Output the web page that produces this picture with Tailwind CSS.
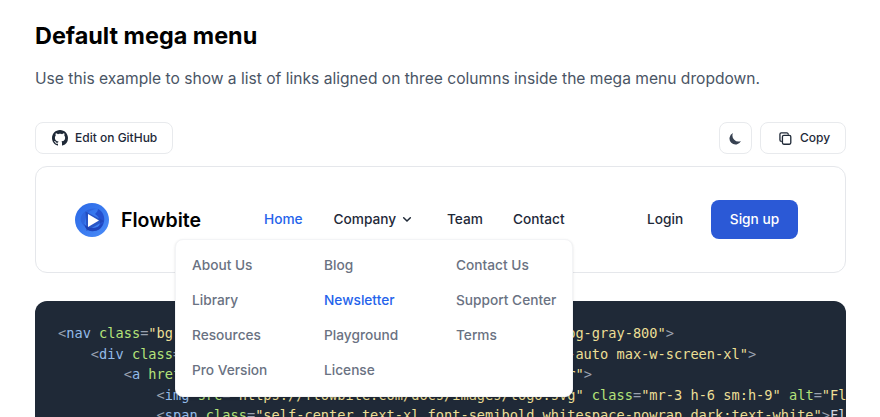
<!DOCTYPE html>
<html lang="en">
<head>
<meta charset="utf-8">
<title>Default mega menu</title>
<script src="https://cdn.jsdelivr.net/npm/@tailwindcss/browser@4"></script>
</head>
<body class="bg-white">
<main class="h-[417px] w-[880px] overflow-hidden pt-[20px] pr-[34px] pl-[35px] font-['Inter',sans-serif] text-gray-900">
  <h2 class="text-[23.4px] leading-8 font-bold text-black">Default mega menu</h2>
  <p class="mt-[15px] text-[15.6px] leading-6 text-gray-600">Use this example to show a list of links aligned on three columns inside the mega menu dropdown.</p>

  <div class="mt-[31px] flex h-[32px] items-stretch gap-[8px]">
    <button class="flex w-[138px] items-center gap-[7px] rounded-lg border border-[#e8eaed] bg-white pl-[16px] text-xs font-medium text-gray-800">
      <svg class="h-[16px] w-[16px]" viewBox="0 0 16 16" fill="#1f2937"><path d="M8 0C3.58 0 0 3.58 0 8c0 3.54 2.29 6.53 5.47 7.59.4.07.55-.17.55-.38 0-.19-.01-.82-.01-1.49-2.01.37-2.53-.49-2.69-.94-.09-.23-.48-.94-.82-1.13-.28-.15-.68-.52-.01-.53.63-.01 1.08.58 1.23.82.72 1.21 1.87.87 2.33.66.07-.52.28-.87.51-1.07-1.78-.2-3.64-.89-3.64-3.95 0-.87.31-1.59.82-2.15-.08-.2-.36-1.02.08-2.12 0 0 .67-.21 2.2.82.64-.18 1.32-.27 2-.27s1.36.09 2 .27c1.53-1.04 2.2-.82 2.2-.82.44 1.1.16 1.92.08 2.12.51.56.82 1.27.82 2.15 0 3.07-1.87 3.75-3.65 3.95.29.25.54.73.54 1.48 0 1.07-.01 1.93-.01 2.2 0 .21.15.46.55.38A8.01 8.01 0 0 0 16 8c0-4.42-3.58-8-8-8z"/></svg>
      Edit on GitHub
    </button>
    <button class="ml-auto flex w-[33px] items-center justify-center rounded-lg border border-[#e8eaed] bg-white" aria-label="Toggle dark mode">
      <svg class="h-[15px] w-[15px]" viewBox="0 0 20 20" fill="#374151"><path d="M17.293 13.293A8 8 0 0 1 6.707 2.707a8.001 8.001 0 1 0 10.586 10.586z"/></svg>
    </button>
    <button class="flex w-[86px] items-center gap-[8px] rounded-lg border border-[#e8eaed] bg-white pl-[18px] text-xs font-medium text-gray-800">
      <svg class="h-[13px] w-[13px]" viewBox="0 0 14 14" fill="none" stroke="#1f2937" stroke-width="1.4"><path d="M10 3V2.500A1.500 1.500 0 0 0 8.500 1h-6A1.500 1.500 0 0 0 1 2.500v6A1.500 1.500 0 0 0 2.500 10H3"/><rect x="3.700" y="3.700" width="9" height="9.500" rx="1.500"/></svg>
      Copy
    </button>
  </div>

  <section class="relative z-10 mt-[12px] h-[107px] rounded-xl border border-gray-200 bg-white">
    <nav class="flex h-full items-center pl-[39px] text-[13.700px] font-medium">
      <a class="flex w-[189px] items-center gap-[12px]">
        <svg class="h-[34px] w-[34px]" viewBox="0 0 34 34">
          <defs><linearGradient id="lg" x1="0" y1="0" x2="1" y2="1"><stop offset="0" stop-color="#2a68e6"/><stop offset="1" stop-color="#4a8cf8"/></linearGradient></defs>
          <circle cx="17" cy="17" r="17" fill="url(#lg)"/>
          <path d="M6 14C8 8 15 4 23 6c-5 0-9 2-11 5l-2 6-1 6c-3-3-4-6-3-9z" fill="#2f66de"/>
          <path d="M23 6c5 2 7 8 6 13-1 5-5 9-11 9 4-2 7-5 7-9 0-3-2-6-5-8 1-1 3-3 3-5z" fill="#2450cf"/>
          <path d="M9 21c1 5 5 8 10 7 4 0 8-3 9-8-3 3-7 5-11 5-3 0-6-2-8-4z" fill="#1f45bd"/>
          <path d="M10.500 8.500L29 18 11.500 28z" fill="#1e40af" opacity=".65"/>
          <path d="M13 11L24 17.500 13 24z" fill="#ffffff"/>
        </svg>
        <span class="text-[19.500px] leading-7 font-semibold text-black">Flowbite</span>
      </a>
      <a class="w-[69.500px] text-[#2563eb]">Home</a>
      <a class="flex w-[113.500px] items-center gap-[6px] text-gray-800">Company
        <svg class="h-[10px] w-[10px]" viewBox="0 0 12 12" fill="none" stroke="#1f2937" stroke-width="1.800" stroke-linecap="round" stroke-linejoin="round"><path d="M2 4.500L6 8.500l4-4"/></svg>
      </a>
      <a class="w-[66px] text-gray-800">Team</a>
      <a class="w-[134px] text-gray-800">Contact</a>
      <a class="w-[64px] text-gray-800">Login</a>
      <a class="flex h-[39px] w-[87px] items-center justify-center rounded-lg bg-[#2b59d6] text-white">Sign up</a>
    </nav>
    <div class="absolute top-[72px] left-[139px] grid h-[158px] w-[398px] grid-cols-[132px_132px_1fr] content-start gap-y-[15px] rounded-lg border border-gray-100 bg-white pt-[15px] pl-[16px] text-[13.700px] leading-5 font-medium text-gray-500 shadow-sm">
      <a>About Us</a><a>Blog</a><a>Contact Us</a>
      <a>Library</a><a class="text-[#2563eb]">Newsletter</a><a>Support Center</a>
      <a>Resources</a><a>Playground</a><a>Terms</a>
      <a>Pro Version</a><a>License</a>
    </div>
  </section>

  <pre class="mt-[28px] h-[200px] overflow-hidden rounded-xl bg-[#1f2937] pt-[22px] pl-[23px] text-gray-300"><code class="block font-['DejaVu_Sans_Mono',monospace] text-[13.650px] leading-[20.500px]"><span class="text-gray-400">&lt;</span><span class="text-[#93bbe8]">nav</span> <span class="text-[#b5e37a]">class</span><span class="text-gray-400">=</span><span class="text-[#ecdf95]">"bg-white border-b border-gray-200 px-4 py-10 dark:bg-gray-800"</span><span class="text-gray-400">&gt;</span>
    <span class="text-gray-400">&lt;</span><span class="text-[#93bbe8]">div</span> <span class="text-[#b5e37a]">class</span><span class="text-gray-400">=</span><span class="text-[#ecdf95]">"flex flex-wrap justify-between items-center mx-auto max-w-screen-xl"</span><span class="text-gray-400">&gt;</span>
        <span class="text-gray-400">&lt;</span><span class="text-[#93bbe8]">a</span> <span class="text-[#b5e37a]">href</span><span class="text-gray-400">=</span><span class="text-[#ecdf95]">"https://flowbite.com"</span> <span class="text-[#b5e37a]">class</span><span class="text-gray-400">=</span><span class="text-[#ecdf95]">"flex items-center"</span><span class="text-gray-400">&gt;</span>
            <span class="text-gray-400">&lt;</span><span class="text-[#93bbe8]">img</span> <span class="text-[#b5e37a]">src</span><span class="text-gray-400">=</span><span class="text-[#ecdf95]">"https://flowbite.com/docs/images/logo.svg"</span> <span class="text-[#b5e37a]">class</span><span class="text-gray-400">=</span><span class="text-[#ecdf95]">"mr-3 h-6 sm:h-9"</span> <span class="text-[#b5e37a]">alt</span><span class="text-gray-400">=</span><span class="text-[#ecdf95]">"Flowbite Logo"</span> <span class="text-gray-400">/&gt;</span>
            <span class="text-gray-400">&lt;</span><span class="text-[#93bbe8]">span</span> <span class="text-[#b5e37a]">class</span><span class="text-gray-400">=</span><span class="text-[#ecdf95]">"self-center text-xl font-semibold whitespace-nowrap dark:text-white"</span><span class="text-gray-400">&gt;</span>Flowbite<span class="text-gray-400">&lt;/</span><span class="text-[#93bbe8]">span</span><span class="text-gray-400">&gt;</span></code></pre>
</main>
</body>
</html>
